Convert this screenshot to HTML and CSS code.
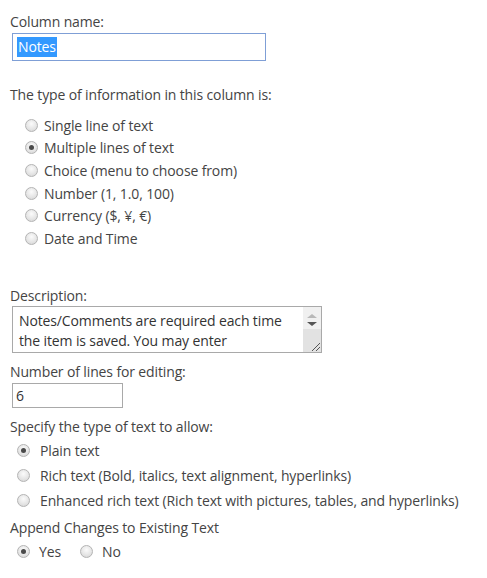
FILE: index.html
```html
<!DOCTYPE html>
<html lang="en">
<head>
  <meta charset="UTF-8" />
  <title>Edit Column</title>
  <link rel="stylesheet" href="styles.css">
</head>
<body>

<div class="column-form">
  <div class="label first">Column name:</div>
  <div class="name-box"><span class="selected">Notes</span></div>

  <div class="label type-label">The type of information in this column is:</div>
  <ul class="choices types">
    <li><span class="radio"></span>Single line of text</li>
    <li><span class="radio checked"></span>Multiple lines of text</li>
    <li><span class="radio"></span>Choice (menu to choose from)</li>
    <li><span class="radio"></span>Number (1, 1.0, 100)</li>
    <li><span class="radio"></span>Currency ($, ¥, €)</li>
    <li><span class="radio"></span>Date and Time</li>
  </ul>

  <div class="label desc-label">Description:</div>
  <div class="desc-box">
    <div class="desc-text">Notes/Comments are required each time the item is saved. You may enter</div>
    <div class="scrollbar">
      <span class="arrow up"></span>
      <span class="arrow down"></span>
      <span class="grip">
        <svg width="12" height="12" viewBox="0 0 12 12"><path d="M11 3 L3 11 M11 7 L7 11" stroke="#555" stroke-width="1" fill="none"/></svg>
      </span>
    </div>
  </div>

  <div class="label lines-label">Number of lines for editing:</div>
  <div class="lines-box">6</div>

  <div class="label allow-label">Specify the type of text to allow:</div>
  <ul class="choices allow">
    <li><span class="radio checked"></span>Plain text</li>
    <li><span class="radio"></span>Rich text (Bold, italics, text alignment, hyperlinks)</li>
    <li><span class="radio"></span>Enhanced rich text (Rich text with pictures, tables, and hyperlinks)</li>
  </ul>

  <div class="label append-label">Append Changes to Existing Text</div>
  <div class="yes-no">
    <span class="opt"><span class="radio checked"></span>Yes</span>
    <span class="opt"><span class="radio"></span>No</span>
  </div>
</div>

</body>
</html>
```

FILE: styles.css
```css
body {
  margin: 0;
  background: #fff;
  color: #444;
  font-family: "Open Sans", "Noto Sans", sans-serif;
  font-size: 14px;
  letter-spacing: -0.13px;
}

.column-form {
  padding: 12px 10px 0 10px;
}

.label {
  line-height: 20px;
  height: 20px;
  white-space: nowrap;
}

.name-box {
  margin: 1px 0 0 2px;
  width: 248px;
  height: 26px;
  border: 1px solid #7f9fd6;
  padding: 0 0 0 4px;
  display: flex;
  align-items: center;
}

.selected {
  background: #3399ff;
  color: #fff;
  line-height: 20px;
  padding: 0 1px;
}

.type-label {
  margin-top: 24px;
}

.choices {
  list-style: none;
  margin: 0;
  padding: 0;
}

.choices li {
  display: flex;
  align-items: center;
  white-space: nowrap;
}

.types {
  margin: 9px 0 0 15px;
}

.types li {
  height: 22.6px;
}

.radio {
  display: inline-block;
  box-sizing: border-box;
  width: 13px;
  height: 13px;
  border-radius: 50%;
  border: 1px solid #b4b4b4;
  background: radial-gradient(circle at 50% 35%, #fbfbfb 0%, #e6e6e6 55%, #d2d2d2 100%);
  margin-right: 7px;
  position: relative;
  flex-shrink: 0;
}

.radio.checked::after {
  content: "";
  position: absolute;
  left: 3px;
  top: 3px;
  width: 5px;
  height: 5px;
  border-radius: 50%;
  background: #4a4a4a;
}

.types .radio {
  margin-right: 6px;
}

.desc-label {
  margin-top: 36px;
}

.desc-box {
  margin-left: 2px;
  width: 308px;
  height: 45px;
  border: 1px solid #a9a9a9;
  display: flex;
}

.desc-text {
  flex: 1;
  padding: 4px 6px 0 6px;
  line-height: 20px;
  overflow: hidden;
  color: #333;
}

.scrollbar {
  width: 18px;
  display: flex;
  flex-direction: column;
  align-items: center;
  background: #f0f0f0;
}

.arrow {
  width: 0;
  height: 0;
  border-left: 5px solid transparent;
  border-right: 5px solid transparent;
}

.arrow.up {
  margin-top: 7px;
  border-bottom: 4px solid #b8b8b8;
}

.arrow.down {
  margin-top: 4px;
  border-top: 4px solid #555;
}

.grip {
  margin-top: auto;
  width: 18px;
  height: 23px;
  background: #e2e2e2;
  display: flex;
  align-items: flex-end;
  justify-content: flex-end;
}

.grip svg {
  display: block;
}

.lines-label {
  margin-top: 9px;
}

.lines-box {
  margin: 1px 0 0 2px;
  width: 106px;
  height: 23px;
  border: 1px solid #a9a9a9;
  padding-left: 3px;
  line-height: 23px;
  color: #333;
}

.allow-label {
  margin-top: 9px;
}

.allow {
  margin: 1px 0 0 7px;
}

.allow li {
  height: 25px;
}

.allow .radio {
  margin-right: 10px;
}

.append-label {
  margin-top: 5px;
}

.yes-no {
  margin: 1px 0 0 7px;
  height: 25px;
  display: flex;
  align-items: center;
}

.opt {
  display: flex;
  align-items: center;
}

.opt .radio {
  margin-right: 9px;
}

.opt + .opt {
  margin-left: 19px;
}
```
